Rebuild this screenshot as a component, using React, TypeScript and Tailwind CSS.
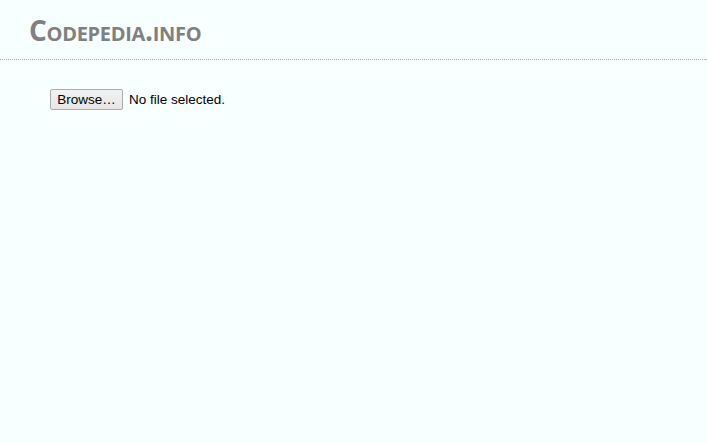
export default function App() {
  return (
    <div className="min-h-screen w-full bg-[#f8ffff] font-['Liberation_Sans',Arial,sans-serif]">
      <header className="h-[60px] border-b border-dotted border-[#aaaaaa] pl-[29px] pt-[12px]">
        <h1 className="font-['Open_Sans',sans-serif] text-[28px] leading-[36px] font-bold text-[#808080] [font-variant:small-caps] tracking-[-0.3px]">
          Codepedia.info
        </h1>
      </header>
      <main className="pl-[50px] pt-[28px]">
        <div className="flex items-center gap-[6px] text-[13.5px] leading-[21px] text-black">
          <span className="h-[21px] w-[73px] flex items-center justify-center border border-[#acacac] rounded-[2px] bg-gradient-to-b from-[#f2f2f2] to-[#e6e6e6]">
            Browse…
          </span>
          <span className="pt-[1px]">No file selected.</span>
        </div>
      </main>
    </div>
  );
}
